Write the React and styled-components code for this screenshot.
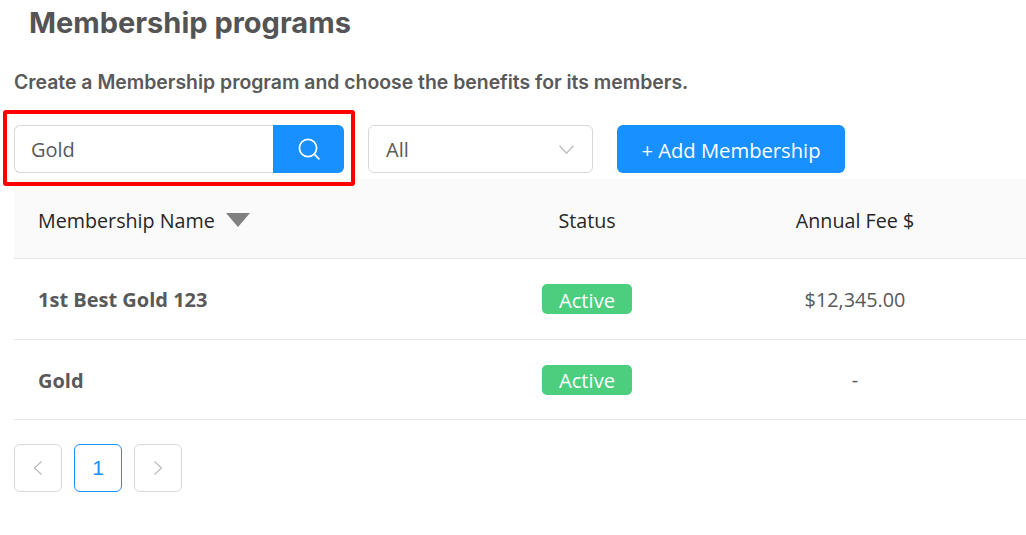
import React from "react";
import styled, { createGlobalStyle } from "styled-components";

const Global = createGlobalStyle`
  html, body { margin: 0; padding: 0; background: #fff; overflow: hidden; }
  * { box-sizing: border-box; }
`;
const Page = styled.div`
  width: 1026px; height: 535px; overflow: hidden; padding: 0 0 0 14px;
  font-family: "Open Sans", "Noto Sans", sans-serif; color: #595959;
`;
const Title = styled.h1`
  margin: 0; padding: 5px 0 0 15px; height: 70px;
  font: 700 29px/35px Inter, sans-serif; color: #545454;
`;
const Intro = styled.p`
  margin: 0; height: 55px;
  font: 600 19.4px/24px Inter, sans-serif; color: #595959;
`;
const Toolbar = styled.div`
  display: flex; align-items: center; height: 48px;
`;
const SearchWrap = styled.div`
  position: relative; display: flex; width: 330px; height: 48px; margin-right: 24px;
`;
const Highlight = styled.div`
  position: absolute; left: -11px; top: -15px; width: 352px; height: 76px;
  border: 4px solid #fe0000; border-radius: 3px; pointer-events: none;
`;
const SearchInput = styled.div`
  flex: 1; padding: 1px 0 0 16px; border: 1px solid #d9d9d9; border-right: 0;
  border-radius: 6px 0 0 6px; font-size: 20px; line-height: 46px; color: #595959;
`;
const SearchButton = styled.div`
  width: 71px; background: #1890ff; border-radius: 0 6px 6px 0;
  display: flex; align-items: center; justify-content: center;
`;
const Select = styled.div`
  width: 225px; height: 48px; padding: 1px 18px 0 17px; margin-right: 24px;
  display: flex; align-items: center; justify-content: space-between;
  border: 1px solid #d9d9d9; border-radius: 6px; font-size: 20px; color: #595959;
`;
const AddButton = styled.div`
  width: 228px; height: 48px; padding-top: 1px; background: #1890ff; color: #fff; border-radius: 6px;
  display: flex; align-items: center; justify-content: center; font-size: 20.2px;
`;
const Table = styled.div`
  margin-top: 6px; width: 1012px;
`;
const Row = styled.div`
  display: grid; grid-template-columns: 473px 200px 336px 3px; align-items: center;
  height: ${p => p.$h}px; border-bottom: 1px solid #e8e8e8;
  background: ${p => (p.$head ? "#fafafa" : "#fff")};
`;
const HeadName = styled.div`
  padding: 3px 0 0 24px; display: flex; align-items: center; gap: 11px;
  font-size: 19.7px; color: #262626;
`;
const HeadCell = styled.div`
  padding-top: 3px; text-align: center; font-size: 19.7px; color: #262626;
`;
const NameCell = styled.div`
  padding: ${p => (p.$low ? "1px" : "0")} 0 0 24px; font-size: 20px; font-weight: 700; color: #595959;
`;
const Cell = styled.div`
  text-align: center; font-size: 19.8px; color: #595959;
`;
const Badge = styled.span`
  display: inline-flex; align-items: center; justify-content: center;
  width: 90px; height: 30px; padding-top: 1px; background: #4bce7d; color: #fff; border-radius: 5px;
  font-size: 20.2px;
`;
const Pager = styled.div`
  display: flex; gap: 12px; margin-top: 24px;
`;
const PageBox = styled.div`
  width: 48px; height: 48px; display: flex; align-items: center; justify-content: center;
  border: 1px solid ${p => (p.$active ? "#1890ff" : "#d9d9d9")}; border-radius: 6px;
  color: #1890ff; font: 400 21px "Liberation Sans", sans-serif;
`;

const Chevron = ({ d, w = 14, h = 14, color = "#bfbfbf" }) => (
  <svg width={w} height={h} viewBox="0 0 14 14" fill="none" stroke={color} strokeWidth="1.3">
    <path d={d} />
  </svg>
);

export default function App() {
  return (
    <Page>
      <Global />
      <Title>Membership programs</Title>
      <Intro>Create a Membership program and choose the benefits for its members.</Intro>
      <Toolbar>
        <SearchWrap>
          <SearchInput>Gold</SearchInput>
          <SearchButton>
            <svg width="24" height="24" viewBox="0 0 24 24" fill="none" stroke="#fff" strokeWidth="1.7">
              <circle cx="11" cy="11" r="8.6" />
              <path d="M17.2 17.2 22.4 22.4" />
            </svg>
          </SearchButton>
          <Highlight />
        </SearchWrap>
        <Select>
          All
          <Chevron d="M0.5 3.5 7 10.5 13.5 3.5" w={15} h={15} />
        </Select>
        <AddButton>+ Add Membership</AddButton>
      </Toolbar>
      <Table>
        <Row $head $h={80}>
          <HeadName>
            Membership Name
            <svg width="24" height="14" viewBox="0 0 24 14"><path d="M0 0H24L12 14Z" fill="#808080" /></svg>
          </HeadName>
          <HeadCell>Status</HeadCell>
          <HeadCell>Annual Fee $</HeadCell>
        </Row>
        <Row $h={81}>
          <NameCell>1st Best Gold 123</NameCell>
          <Cell><Badge>Active</Badge></Cell>
          <Cell>$12,345.00</Cell>
        </Row>
        <Row $h={80}>
          <NameCell $low>Gold</NameCell>
          <Cell><Badge>Active</Badge></Cell>
          <Cell>-</Cell>
        </Row>
      </Table>
      <Pager>
        <PageBox><Chevron d="M10.5 0.5 3.5 7 10.5 13.5" w={14} h={14} /></PageBox>
        <PageBox $active>1</PageBox>
        <PageBox><Chevron d="M3.5 0.5 10.5 7 3.5 13.5" w={14} h={14} /></PageBox>
      </Pager>
    </Page>
  );
}
